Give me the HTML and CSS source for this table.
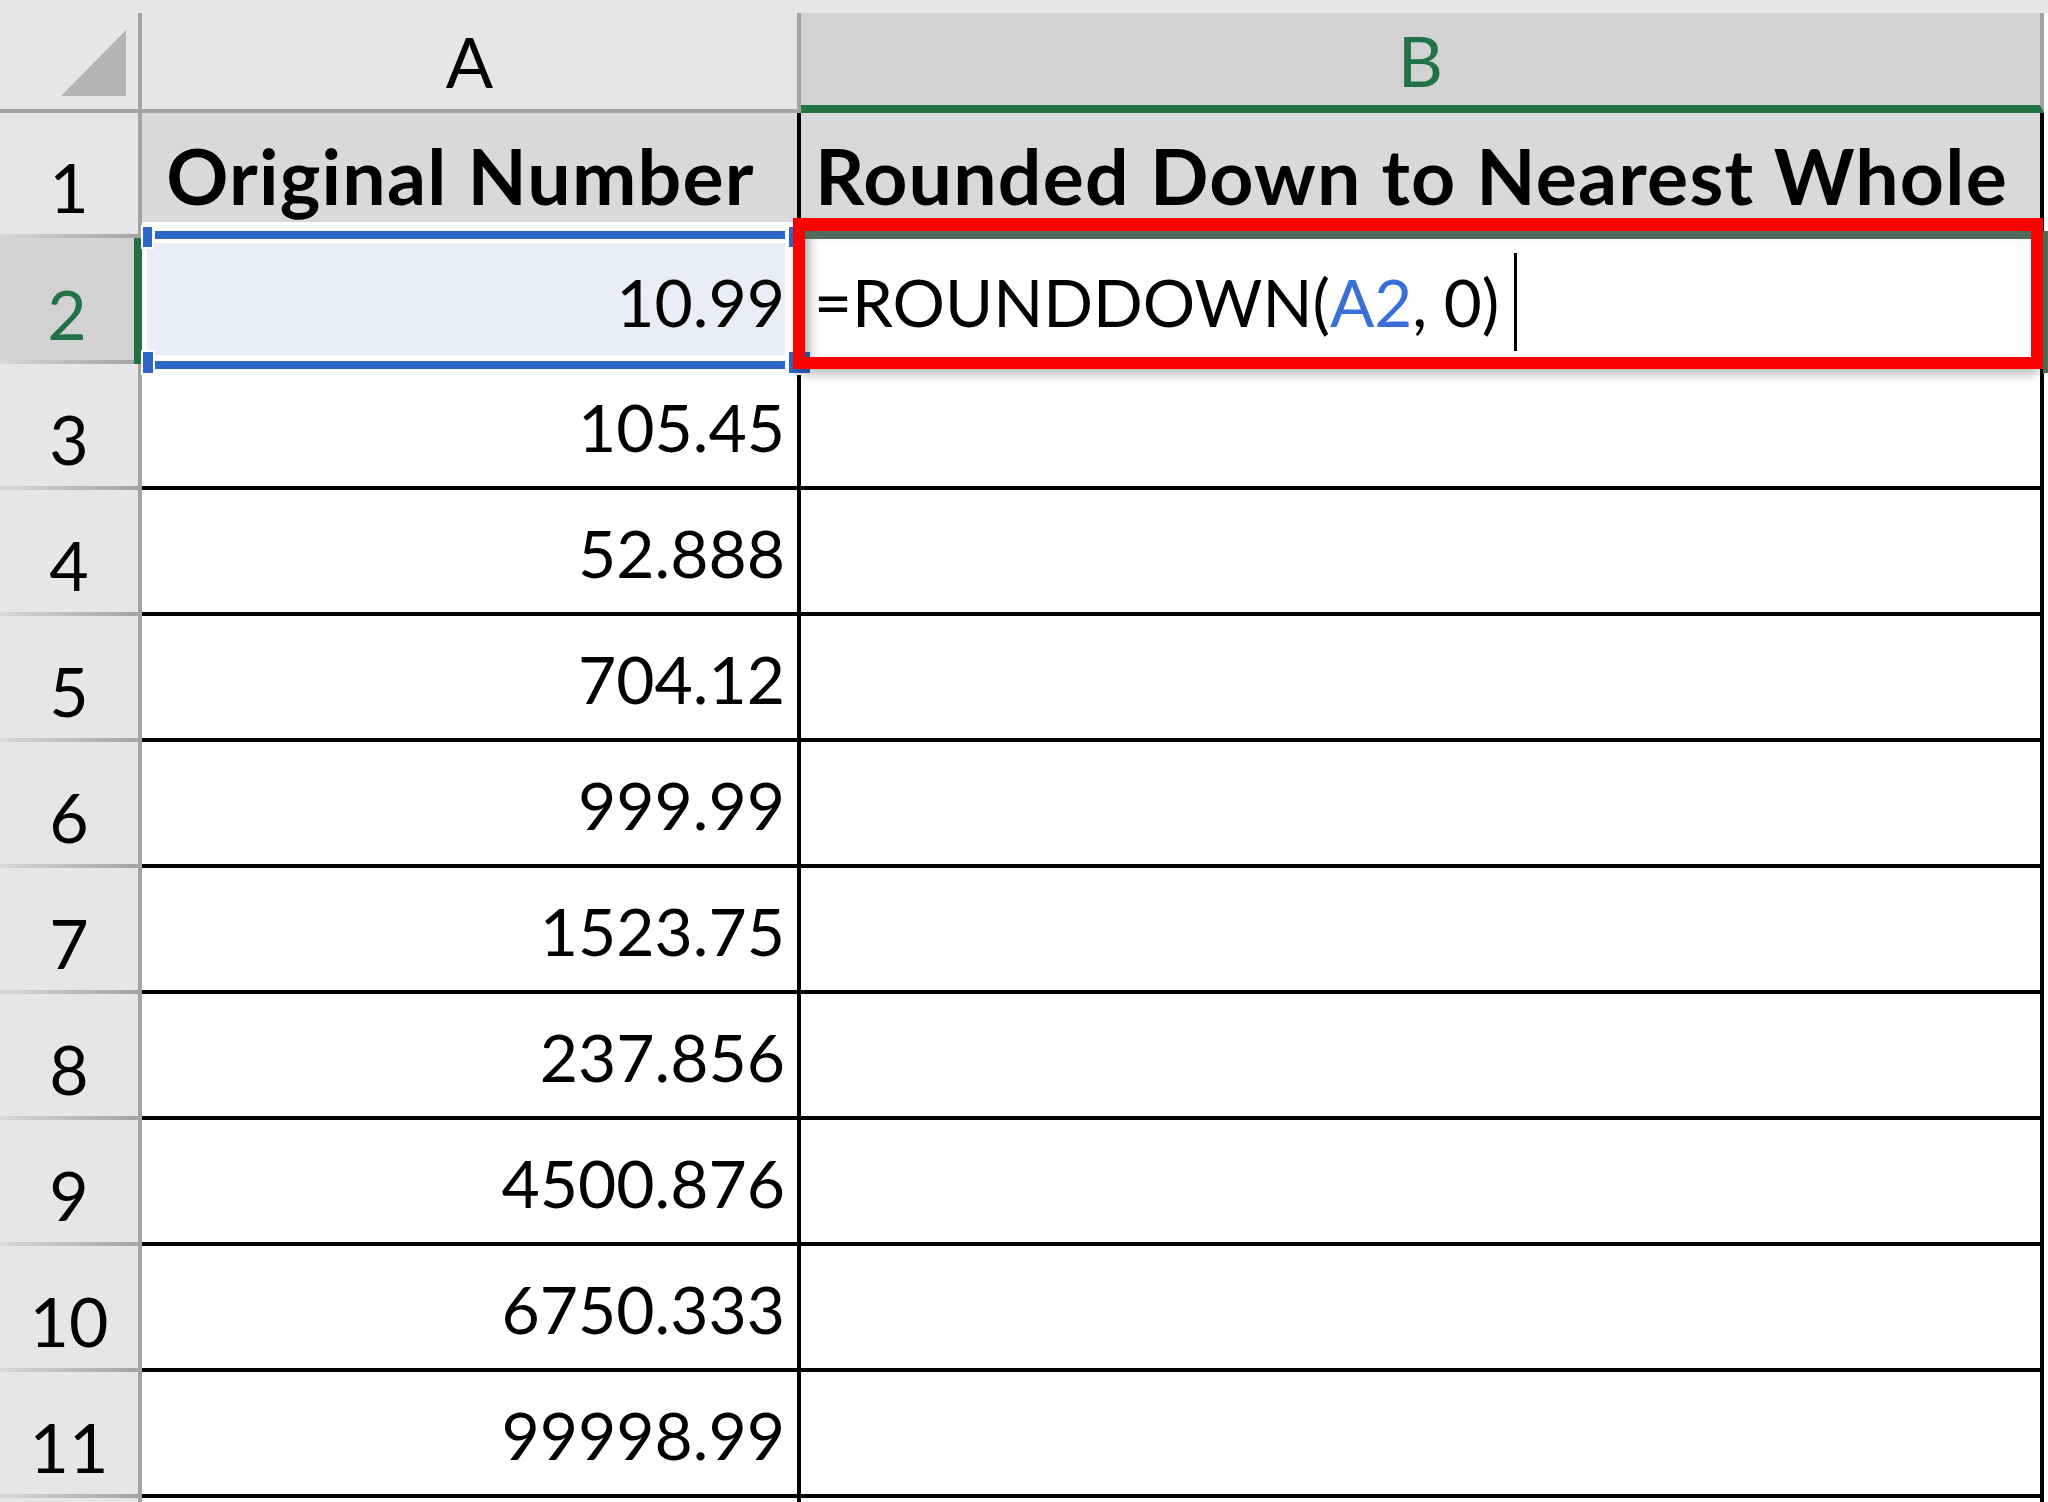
FILE: index.html
```html
<!DOCTYPE html>
<html lang="en">
<head>
<meta charset="utf-8">
<title>ROUNDDOWN example</title>
<link rel="stylesheet" href="styles.css">
</head>
<body>
<div class="sheet">
  <div class="strip"></div>
  <div class="grid">
    <div class="corner"><svg width="65" height="66" viewBox="0 0 65 66"><polygon points="65,0 65,66 0,66" fill="#b4b4b4"/></svg></div>
    <div class="colhead">A</div>
    <div class="colhead sel">B</div>

    <div class="rowhead">1</div>
    <div class="cell title">Original Number</div>
    <div class="cell title">Rounded Down to Nearest Whole</div>

    <div class="rowhead sel r2">2</div>
    <div class="cell num refcell r2">10.99</div>
    <div class="cell formula"><span class="ftext">=ROUNDDOWN(<span class="ref">A2</span>, 0)</span><span class="caret"></span></div>

    <div class="rowhead">3</div>
    <div class="cell num">105.45</div>
    <div class="cell"></div>

    <div class="rowhead">4</div>
    <div class="cell num">52.888</div>
    <div class="cell"></div>

    <div class="rowhead">5</div>
    <div class="cell num">704.12</div>
    <div class="cell"></div>

    <div class="rowhead">6</div>
    <div class="cell num">999.99</div>
    <div class="cell"></div>

    <div class="rowhead">7</div>
    <div class="cell num">1523.75</div>
    <div class="cell"></div>

    <div class="rowhead">8</div>
    <div class="cell num">237.856</div>
    <div class="cell"></div>

    <div class="rowhead">9</div>
    <div class="cell num">4500.876</div>
    <div class="cell"></div>

    <div class="rowhead">10</div>
    <div class="cell num">6750.333</div>
    <div class="cell"></div>

    <div class="rowhead">11</div>
    <div class="cell num">99998.99</div>
    <div class="cell"></div>

    <div class="rowhead tail"></div>
    <div class="cell tail"></div>
    <div class="cell tail"></div>
  </div>

  <div class="refbox">
    <div class="halo"></div>
    <div class="line top"></div>
    <div class="line bottom"></div>
    <div class="handle tl"></div>
    <div class="handle bl"></div>
    <div class="handle tr"></div>
    <div class="handle br"></div>
  </div>

  <div class="actright"></div>
  <div class="redbox"><div class="act"></div></div>
</div>
</body>
</html>
```

FILE: styles.css
```css
html, body {
  margin: 0;
  padding: 0;
  background: #ffffff;
  overflow: hidden;
}

body {
  font-family: Lato, "Open Sans", "Liberation Sans", sans-serif;
  color: #000;
}

.sheet {
  position: relative;
  width: 2048px;
  height: 1502px;
}

.strip {
  height: 13px;
  background: #e6e6e6;
}

.grid {
  display: grid;
  grid-template-columns: 142px 659px 1243px;
  grid-template-rows: 100px 125px repeat(10, 126px) 4px;
}

.grid > div {
  box-sizing: border-box;
  display: flex;
  line-height: 1;
  white-space: nowrap;
}

.corner {
  background: #e6e6e6;
  border-right: 4px solid #a3a3a3;
  border-bottom: 4px solid #a3a3a3;
  justify-content: flex-end;
  align-items: flex-end;
  padding: 0 12px 13px 0;
}

.colhead {
  background: #e6e6e6;
  border-right: 4px solid #a3a3a3;
  border-bottom: 4px solid #a3a3a3;
  justify-content: center;
  align-items: flex-end;
  font-size: 70px;
  padding-bottom: 13px;
}

.colhead.sel {
  background: #d2d2d2;
  border-bottom: 8px solid #217346;
  color: #217346;
  padding-bottom: 10px;
}

.rowhead {
  background: linear-gradient(to right, #d8d8d8, #a3a3a3) left bottom / 100% 4px no-repeat, #e6e6e6;
  border-right: 4px solid #a3a3a3;
  justify-content: center;
  align-items: flex-end;
  font-size: 68px;
  padding-bottom: 17px;
}

.rowhead.sel {
  background: linear-gradient(to right, #d8d8d8, #a3a3a3) left bottom / 100% 4px no-repeat, #d2d2d2;
  border-right: 8px solid #217346;
  color: #217346;
  padding-bottom: 16px;
}

.rowhead.tail {
  background: #e6e6e6;
}

.cell {
  background: #ffffff;
  border-right: 4px solid #000;
  border-bottom: 4px solid #000;
  align-items: flex-end;
}

.cell.tail {
  border-bottom: none;
}

.cell.title {
  background: #d9d9d9;
  font-weight: 700;
  font-size: 77px;
  letter-spacing: 1.2px;
  justify-content: center;
  padding: 0 18px 20px 0;
}

.cell.num {
  justify-content: flex-end;
  font-size: 66px;
  padding: 0 12px 26px 0;
}

.cell.num.r2 {
  padding-bottom: 25px;
}

.cell.refcell {
  background: #e8eef8;
}

.cell.formula {
  padding-left: 13px;
}

.ftext {
  font-size: 65.5px;
  margin-bottom: 26px;
}

.ref {
  color: #3a6fd8;
}

.caret {
  width: 3px;
  height: 98px;
  background: #000;
  margin: 0 0 9px 15px;
}

/* formula reference highlight around A2 */
.refbox {
  position: absolute;
  left: 142px;
  top: 222px;
  width: 655px;
  height: 151px;
}

.halo {
  position: absolute;
  inset: 0;
  box-sizing: border-box;
  border-style: solid;
  border-color: #ffffff;
  border-width: 21px 12px 18px 5px;
}

.line {
  position: absolute;
  left: 13px;
  width: 630px;
  height: 8px;
  background: #2f67c8;
}

.line.top { top: 9px; }
.line.bottom { top: 139px; }

.handle {
  position: absolute;
  background: #2f67c8;
  outline: 2px solid #ffffff;
}

.handle.tl { left: 1px; top: 5px; width: 9px; height: 20px; }
.handle.bl { left: 1px; top: 130px; width: 10px; height: 21px; }
.handle.tr { left: 647px; top: 5px; width: 16px; height: 20px; }
.handle.br { left: 647px; top: 130px; width: 21px; height: 21px; }

/* active cell edge peeking out of the annotation */
.actright {
  position: absolute;
  left: 2043px;
  top: 231px;
  width: 5px;
  height: 142px;
  background: #516b5c;
}

/* red annotation rectangle around B2 */
.redbox {
  position: absolute;
  left: 793px;
  top: 218px;
  width: 1250px;
  height: 151px;
  box-sizing: border-box;
  border: 12px solid #ff0000;
  border-top-width: 13px;
  box-shadow: 0 9px 10px -4px rgba(0, 0, 0, 0.28), inset 12px 8px 12px -8px rgba(0, 0, 0, 0.35);
}

.act {
  position: absolute;
  left: 0;
  right: 0;
  top: 0;
  height: 8px;
  background: #516b5c;
}
```
